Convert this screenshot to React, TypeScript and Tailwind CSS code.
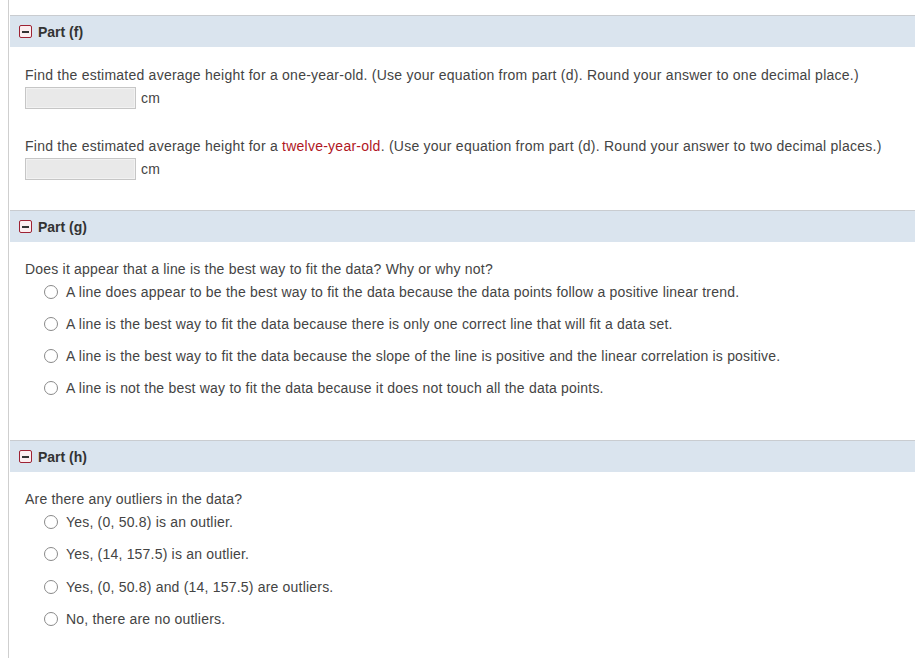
import React from "react";

function Header({ label }: { label: string }) {
  return (
    <div className="border-t border-[#c9ccd0] bg-[#dae4ee] h-[32px] flex items-center pl-[9px]">
      <div className="w-[13px] h-[13px] border border-[#9e2233] rounded-[2px] bg-[#fbeef0] flex items-center justify-center">
        <div className="w-[7px] h-[2px] bg-[#333]" />
      </div>
      <span className="ml-[6px] text-[14px] font-bold text-[#333] tracking-normal">{label}</span>
    </div>
  );
}

function Radio({ text }: { text: string }) {
  return (
    <div className="flex items-center h-[18px] pl-[19px]">
      <div className="w-[14px] h-[14px] rounded-full border border-[#8a8a8a] bg-white" />
      <span className="ml-[8px]">{text}</span>
    </div>
  );
}

function Input() {
  return (
    <div className="flex items-center h-[22px]">
      <div className="w-[111px] h-[22px] border border-[#c6c6c6] bg-[#e9e9e9] shadow-[inset_0_0_0_1px_#f2f2f2]" />
      <span className="ml-[5px]">cm</span>
    </div>
  );
}

export default function App() {
  return (
    <div
      className="w-[915px] h-[658px] bg-white text-[14px] text-[#444] leading-[18px] tracking-[0.2px] overflow-hidden"
      style={{ fontFamily: '"Liberation Sans", Arial, sans-serif' }}
    >
      <div className="ml-[8px] border-l border-[#cfcfcf] h-full pl-px pt-[15px]">
        <Header label="Part (f)" />
        <div className="pl-[15px] pt-[19px] pb-[30px]">
          <div className="tracking-[0.24px]">
            Find the estimated average height for a one-year-old. (Use your equation from part (d). Round your answer to one decimal place.)
          </div>
          <div className="mt-[3px]">
            <Input />
          </div>
          <div className="mt-[28px] tracking-[0.24px]">
            Find the estimated average height for a <span className="text-[#b0161e]">twelve-year-old</span>. (Use your equation from part (d). Round your answer to two decimal places.)
          </div>
          <div className="mt-[3px]">
            <Input />
          </div>
        </div>
        <Header label="Part (g)" />
        <div className="pl-[15px] pt-[18px] pb-[43px]">
          <div>Does it appear that a line is the best way to fit the data? Why or why not?</div>
          <div className="mt-[5px] flex flex-col gap-[14px]">
            <Radio text="A line does appear to be the best way to fit the data because the data points follow a positive linear trend." />
            <Radio text="A line is the best way to fit the data because there is only one correct line that will fit a data set." />
            <Radio text="A line is the best way to fit the data because the slope of the line is positive and the linear correlation is positive." />
            <Radio text="A line is not the best way to fit the data because it does not touch all the data points." />
          </div>
        </div>
        <Header label="Part (h)" />
        <div className="pl-[15px] pt-[18px]">
          <div>Are there any outliers in the data?</div>
          <div className="mt-[5px] flex flex-col gap-[14.4px]">
            <Radio text="Yes, (0, 50.8) is an outlier." />
            <Radio text="Yes, (14, 157.5) is an outlier." />
            <Radio text="Yes, (0, 50.8) and (14, 157.5) are outliers." />
            <Radio text="No, there are no outliers." />
          </div>
        </div>
      </div>
    </div>
  );
}
